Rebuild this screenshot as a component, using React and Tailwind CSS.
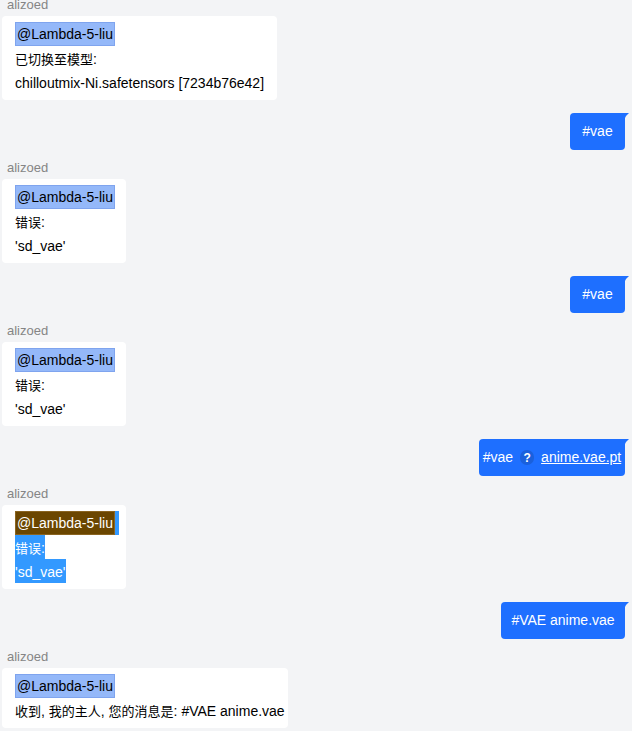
const font = { fontFamily: '"Liberation Sans", "Noto Sans CJK SC", sans-serif' };

// the CJK runs sit a touch narrower than the latin text in the reference
function Cjk({ children }) {
    return <span className="text-[13px]">{children}</span>;
}

function Mention({ selected }) {
    if (selected) {
        return (
            <span className="inline-block h-[24px] leading-[22px] px-px border border-[#8a6420] bg-[#6b4600] text-white whitespace-nowrap">
                @Lambda-5-liu
            </span>
        );
    }
    return (
        <span className="inline-block h-[24px] leading-[22px] px-px border border-[#7fa4ee] bg-[#94b8f9] whitespace-nowrap">
            @Lambda-5-liu
        </span>
    );
}

function BotMessage({ width, lines, selected }) {
    return (
        <div className="flex flex-col">
            <div className="pl-[7px] h-[16px] leading-[16px] text-[13px] text-[#858585]">alizoed</div>
            <div className={`mt-[3px] ml-[2px] bg-white rounded-[4px] py-[6px] pl-[13px] text-[14px] text-black whitespace-nowrap ${width}`}>
                <div className="h-[24px] flex items-center">
                    <Mention selected={selected} />
                    {selected && <span className="inline-block h-[24px] w-[4px] bg-[#3399ff]" />}
                </div>
                {lines.map((line, i) => (
                    <div key={i} className="h-[24px]">
                        {selected ? (
                            <span className="inline-block h-[24px] pt-[3px] leading-[20px] bg-[#3399ff] text-white">{line}</span>
                        ) : (
                            <div className="pt-[3px] leading-[20px]">{line}</div>
                        )}
                    </div>
                ))}
            </div>
        </div>
    );
}

function Tail() {
    return (
        <svg className="absolute top-0 -right-[4px]" width="5" height="7" viewBox="0 0 5 7">
            <path d="M0 0 H5 Q2 2 0 7 Z" fill="#1e6fff" />
        </svg>
    );
}

function UserMessage({ width, children }) {
    return (
        <div className="flex justify-end pr-[7px] mt-[13px] mb-[10px]">
            <div className={`relative h-[37px] flex items-center justify-center bg-[#1e6fff] text-white text-[14px] rounded-[4px] rounded-tr-none whitespace-nowrap ${width}`}>
                {children}
                <Tail />
            </div>
        </div>
    );
}

const errorLines = [<><Cjk>错误</Cjk>:</>, "'sd_vae'"];

export default function App() {
    return (
        <div className="w-[632px] h-[731px] overflow-hidden bg-[#f3f4f6]" style={font}>
            <div className="-mt-[3px] flex flex-col">

                <BotMessage
                    width="w-[275px]"
                    lines={[<><Cjk>已切换至模型</Cjk>:</>, "chilloutmix-Ni.safetensors [7234b76e42]"]}
                />
                <UserMessage width="w-[55px]">#vae</UserMessage>

                <BotMessage width="w-[124px]" lines={errorLines} />
                <UserMessage width="w-[55px]">#vae</UserMessage>

                <BotMessage width="w-[124px]" lines={errorLines} />
                <UserMessage width="w-[146px]">
                    <span>#vae</span>
                    <span className="mx-[7px] w-[14px] h-[15px] rounded-full bg-[#1a60dc] flex items-center justify-center text-[12px] font-bold leading-none">?</span>
                    <span className="underline">anime.vae.pt</span>
                </UserMessage>

                <BotMessage width="w-[124px]" lines={errorLines} selected />
                <UserMessage width="w-[124px]">#VAE anime.vae</UserMessage>

                <BotMessage
                    width="w-[286px]"
                    lines={[<><Cjk>收到</Cjk>, <Cjk>我的主人</Cjk>, <Cjk>您的消息是</Cjk>: #VAE anime.vae</>]}
                />
            </div>
        </div>
    );
}
